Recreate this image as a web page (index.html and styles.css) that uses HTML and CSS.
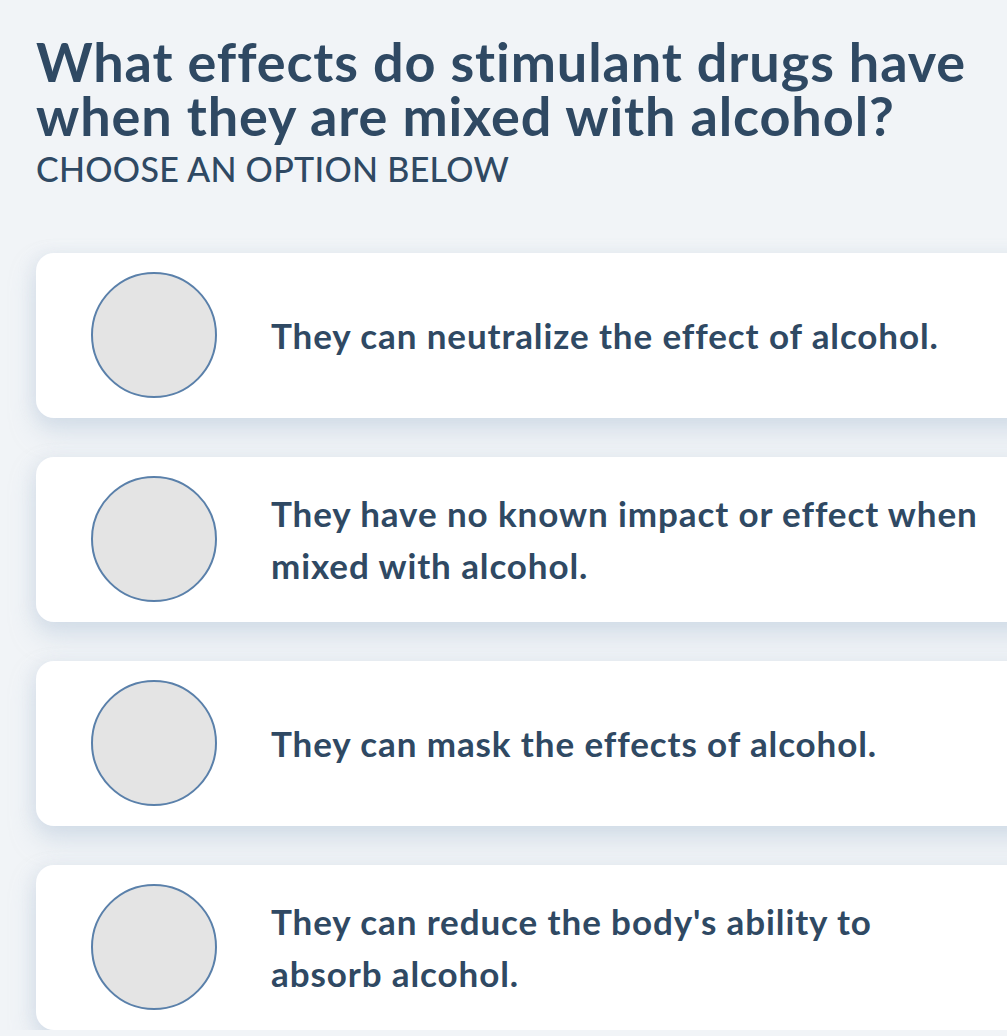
FILE: index.html
```html
<!DOCTYPE html>
<html lang="en">

<head>
    <meta charset="UTF-8">
    <meta name="viewport" content="width=device-width, initial-scale=1.0">
    <title>Question</title>
    <link rel="stylesheet" href="styles.css">
</head>

<body>
    <header class="question">
        <h1>What effects do stimulant drugs have when they are mixed with alcohol?</h1>
        <p class="hint">CHOOSE AN OPTION BELOW</p>
    </header>

    <ul class="options">
        <li class="option">
            <span class="radio"></span>
            <span class="label">They can neutralize the effect of alcohol.</span>
        </li>
        <li class="option">
            <span class="radio"></span>
            <span class="label">They have no known impact or effect when mixed with alcohol.</span>
        </li>
        <li class="option">
            <span class="radio"></span>
            <span class="label">They can mask the effects of alcohol.</span>
        </li>
        <li class="option">
            <span class="radio"></span>
            <span class="label">They can reduce the body's ability to absorb alcohol.</span>
        </li>
    </ul>
</body>

</html>
```

FILE: styles.css
```css
html,
body {
    margin: 0;
    padding: 0;
    background-color: #f1f4f7;
    overflow: hidden;
}

body {
    font-family: Lato, "Open Sans", sans-serif;
    color: #2f4963;
    padding: 35px 0 0 36px;
}

h1 {
    margin: 0;
    font-size: 54px;
    line-height: 54px;
    font-weight: 700;
    letter-spacing: 0.9px;
    width: 960px;
}

.hint {
    margin: 6px 0 0;
    font-size: 34px;
    line-height: 40px;
    font-weight: 500;
    letter-spacing: 0.3px;
}

.options {
    list-style: none;
    margin: 64px 0 0;
    padding: 0;
    display: flex;
    flex-direction: column;
    gap: 39px;
}

.option {
    display: flex;
    align-items: center;
    gap: 54px;
    width: 1010px;
    min-height: 165px;
    box-sizing: border-box;
    padding: 19px 0 20px 55px;
    background-color: #fff;
    border-radius: 18px;
    box-shadow: 0 14px 24px rgba(186, 201, 220, 0.5), -4px 0 14px rgba(200, 212, 226, 0.25);
}

.radio {
    flex: none;
    width: 126px;
    height: 126px;
    box-sizing: border-box;
    border: 2.5px solid #5a80aa;
    border-radius: 50%;
    background-color: #e4e4e4;
}

.label {
    font-size: 35px;
    line-height: 52px;
    font-weight: 700;
    letter-spacing: 0.9px;
    width: 715px;
}
```
